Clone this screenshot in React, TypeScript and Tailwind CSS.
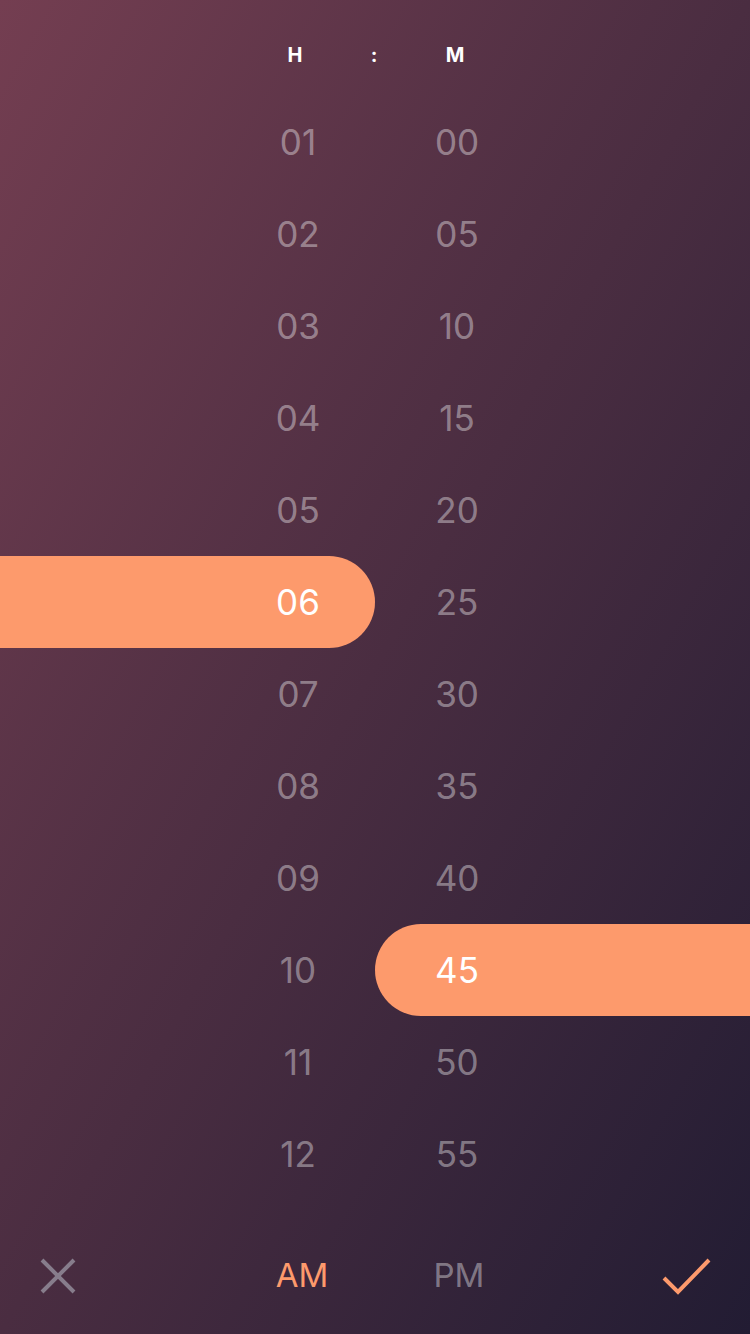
import React from "react";

const hours = ["01", "02", "03", "04", "05", "06", "07", "08", "09", "10", "11", "12"];
const minutes = ["00", "05", "10", "15", "20", "25", "30", "35", "40", "45", "50", "55"];

export default function App() {
    const selectedHour = "06";
    const selectedMinute = "45";

    return (
        <div
            className="w-[750px] h-[1334px] overflow-hidden flex flex-col bg-gradient-to-br from-[#743e51] via-[#4a2d41] to-[#221c33]"
            style={{ fontFamily: "Inter, 'Liberation Sans', sans-serif" }}
        >
            {/* Header */}
            <div className="h-[96px] pt-[14px] flex items-center text-white text-[20px] font-bold">
                <div className="ml-[255px] w-[80px] shrink-0 text-center">H</div>
                <div className="ml-[33px] w-[12px] shrink-0 text-center">:</div>
                <div className="ml-[35px] w-[80px] shrink-0 text-center">M</div>
            </div>

            {/* Wheels */}
            <div className="flex">
                <div className="w-[375px] flex flex-col">
                    {hours.map((h) => {
                        const active = h === selectedHour;
                        return (
                            <div
                                key={h}
                                className={`h-[92px] flex items-center ${active ? "bg-[#fd9a6c] rounded-r-full text-white" : "text-white/40"}`}
                            >
                                <span className="ml-[258px] w-[80px] text-center text-[35px]">{h}</span>
                            </div>
                        );
                    })}
                </div>
                <div className="w-[375px] flex flex-col">
                    {minutes.map((m) => {
                        const active = m === selectedMinute;
                        return (
                            <div
                                key={m}
                                className={`h-[92px] flex items-center ${active ? "bg-[#fd9a6c] rounded-l-full text-white" : "text-white/40"}`}
                            >
                                <span className="ml-[42px] w-[80px] text-center text-[35px]">{m}</span>
                            </div>
                        );
                    })}
                </div>
            </div>

            {/* Footer */}
            <div className="h-[134px] pt-[18px] flex items-center">
                <svg width="36" height="36" viewBox="0 0 36 36" className="ml-[40px]">
                    <path d="M2 2 L34 34 M34 2 L2 34" stroke="#877d8c" strokeWidth="4" fill="none" />
                </svg>
                <div className="ml-[186px] w-[80px] text-center text-[33px] text-[#fd9a6c]">AM</div>
                <div className="ml-[77px] w-[80px] text-center text-[33px] text-white/40">PM</div>
                <svg width="50" height="38" viewBox="0 0 50 38" className="ml-[163px]">
                    <path d="M2 21 L16 35 L47 3" stroke="#fd9a6c" strokeWidth="4" fill="none" />
                </svg>
            </div>
        </div>
    );
}
